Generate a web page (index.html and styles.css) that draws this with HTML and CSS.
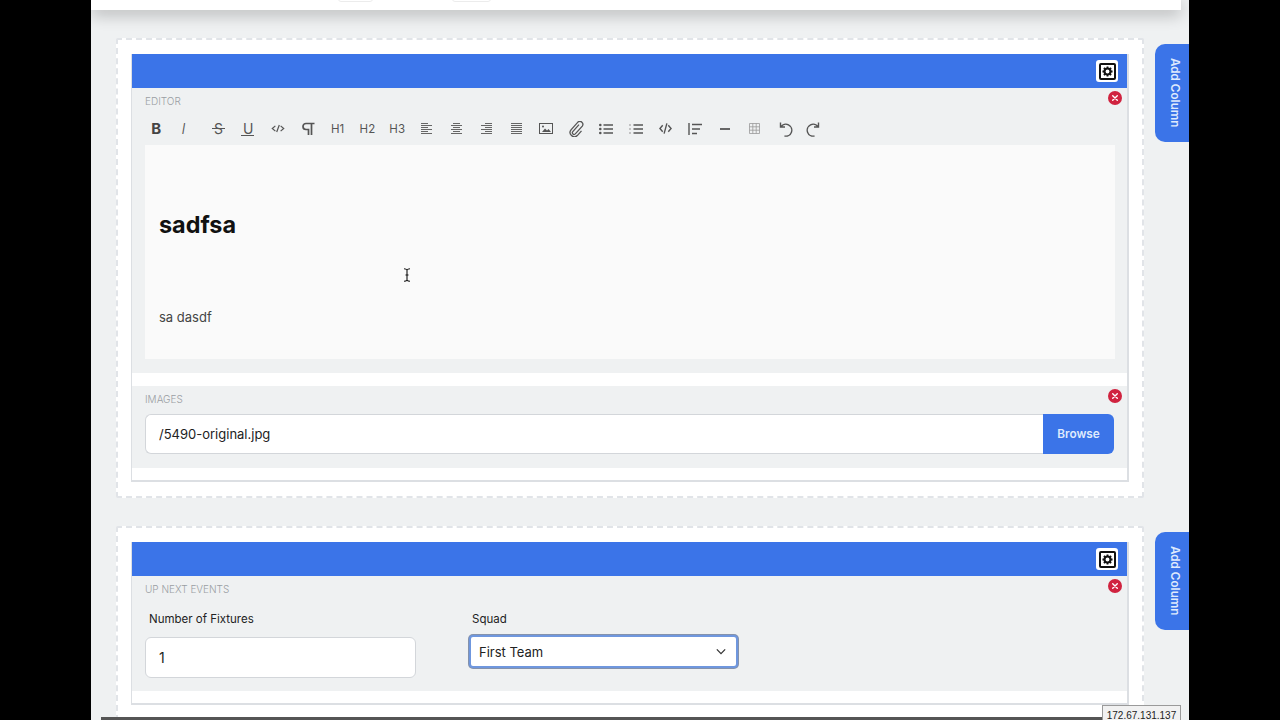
FILE: index.html
```html
<!DOCTYPE html>
<html lang="en">
<head>
<meta charset="utf-8">
<title>Page builder</title>
<link rel="stylesheet" href="styles.css">
</head>
<body>
<div class="page">
  <header class="topbar"><span class="stub stub-a"></span><span class="stub stub-b"></span></header>
  <div class="rows">
    <section class="row">
      <div class="dash">
        <div class="card">
          <div class="card-head"><button class="gear"><span class="gear-box"><svg viewBox="0 0 24 24" width="11" height="11"><circle cx="12" cy="12" r="6.500" fill="none" stroke="#111" stroke-width="4.500"/><path d="M12 1v5M12 18v5M1 12h5M18 12h5M4.200 4.200l3.500 3.500M16.300 16.300l3.500 3.500M19.800 4.200l-3.500 3.500M7.700 16.300l-3.500 3.500" stroke="#111" stroke-width="4"/></svg></span></button></div>
          <div class="block block-editor">
            <span class="remove"><svg viewBox="0 0 14 14" width="8" height="8"><path d="M3 3l8 8M11 3l-8 8" stroke="#fff" stroke-width="2.4" stroke-linecap="round"/></svg></span>
            <div class="block-label">EDITOR</div>
            <div class="toolbar">
              <span class="tool tool-b">B</span>
              <span class="tool tool-i">I</span>
              <span class="tool tool-s">S</span>
              <span class="tool tool-u">U</span>
              <span class="tool"><svg viewBox="0 0 16 12" width="14" height="11"><path d="M5 3L1.500 6 5 9M11 3l3.500 3L11 9M9.500 2l-3 8" fill="none" stroke="#555" stroke-width="1.400"/></svg></span>
              <span class="tool"><svg viewBox="0 0 14 14" width="14" height="14"><path d="M13.500 1.500H5a3 3 0 0 0 0 6h2.500V13M10.500 1.500V13" fill="none" stroke="#555" stroke-width="1.700"/></svg></span>
              <span class="tool tool-h">H1</span>
              <span class="tool tool-h">H2</span>
              <span class="tool tool-h">H3</span>
              <span class="tool"><svg viewBox="0 0 11 11" width="11" height="11"><path d="M0 .5h7M0 2.500h11M0 4.500h7M0 6.500h11M0 8.500h7M0 10.500h11" stroke="#666"/></svg></span>
              <span class="tool"><svg viewBox="0 0 11 11" width="11" height="11"><path d="M2 .5h7M0 2.500h11M2 4.500h7M0 6.500h11M2 8.500h7M0 10.500h11" stroke="#666"/></svg></span>
              <span class="tool"><svg viewBox="0 0 11 11" width="11" height="11"><path d="M4 .5h7M0 2.500h11M4 4.500h7M0 6.500h11M4 8.500h7M0 10.500h11" stroke="#666"/></svg></span>
              <span class="tool"><svg viewBox="0 0 11 11" width="11" height="11"><path d="M0 .5h11M0 2.500h11M0 4.500h11M0 6.500h11M0 8.500h11M0 10.500h11" stroke="#666"/></svg></span>
              <span class="tool"><svg viewBox="0 0 14 11" width="14" height="11"><rect x=".5" y=".5" width="13" height="10" fill="none" stroke="#555"/><path d="M3 9l3-3.500 2 2 1.500-1.500L12 9z" fill="#555"/><circle cx="4" cy="3.500" r="1" fill="#555"/></svg></span>
              <span class="tool"><svg viewBox="0 0 16 16" width="16" height="16"><path d="M10.800 3.800l-6.200 7a1.700 1.700 0 0 0 2.500 2.300l7-7.800a3 3 0 0 0-4.400-4L2.800 9a4.300 4.300 0 0 0 6.300 5.800l4.200-4.700" transform="translate(.2 -.2)" fill="none" stroke="#555" stroke-width="1.300"/></svg></span>
              <span class="tool"><svg viewBox="0 0 14 12" width="14" height="12"><path d="M4.500 2H14M4.500 6H14M4.500 10H14" stroke="#555" stroke-width="1.300"/><circle cx="1.300" cy="2" r="1.300" fill="#555"/><circle cx="1.300" cy="6" r="1.300" fill="#555"/><circle cx="1.300" cy="10" r="1.300" fill="#555"/></svg></span>
              <span class="tool"><svg viewBox="0 0 14 12" width="14" height="12"><path d="M4.500 2H14M4.500 6H14M4.500 10H14" stroke="#555" stroke-width="1.300"/><path d="M1 1v2M1 5v2M1 9v2" stroke="#aaa" stroke-width="1.300"/></svg></span>
              <span class="tool"><svg viewBox="0 0 14 14" width="13" height="13"><path d="M4 3.500L1 7l3 3.500M10 3.500L13 7l-3 3.500M8.500 1.500l-3 11" fill="none" stroke="#555" stroke-width="1.500"/></svg></span>
              <span class="tool"><svg viewBox="0 0 14 12" width="14" height="12"><path d="M1 0v12" stroke="#555" stroke-width="1.400"/><path d="M4 1.500h10M4 6h8M4 10.500h5" stroke="#555" stroke-width="1.400"/></svg></span>
              <span class="tool tool-hr"><svg viewBox="0 0 10 4" width="10" height="4"><path d="M0 2h10" stroke="#444" stroke-width="1.600"/></svg></span>
              <span class="tool"><svg viewBox="0 0 11 11" width="11" height="11"><path d="M.5.5h10v10H.5zM.5 3.800h10M.5 7.200h10M3.800.5v10M7.200.5v10" fill="none" stroke="#999" stroke-width=".8"/></svg></span>
              <span class="tool"><svg viewBox="0 0 16 16" width="16" height="16"><path d="M3.500 1.500v4.500H8M3.800 5.800A6 6 0 1 1 7.500 15" fill="none" stroke="#555" stroke-width="1.400"/></svg></span>
              <span class="tool"><svg viewBox="0 0 16 16" width="16" height="16"><path d="M12.500 1.500v4.500H8M12.200 5.800A6 6 0 1 0 8.500 15" fill="none" stroke="#555" stroke-width="1.400"/></svg></span>
            </div>
            <div class="editor">
              <h2 class="editor-title">sadfsa</h2>
              <p class="editor-text">sa dasdf</p>
            </div>
          </div>
          <div class="block block-images">
            <span class="remove"><svg viewBox="0 0 14 14" width="8" height="8"><path d="M3 3l8 8M11 3l-8 8" stroke="#fff" stroke-width="2.4" stroke-linecap="round"/></svg></span>
            <div class="block-label">IMAGES</div>
            <div class="file">
              <input class="file-input" type="text" value="/5490-original.jpg">
              <button class="browse">Browse</button>
            </div>
          </div>
        </div>
      </div>
      <button class="add-col">Add Column</button>
    </section>
    <section class="row">
      <div class="dash">
        <div class="card">
          <div class="card-head"><button class="gear"><span class="gear-box"><svg viewBox="0 0 24 24" width="11" height="11"><circle cx="12" cy="12" r="6.500" fill="none" stroke="#111" stroke-width="4.500"/><path d="M12 1v5M12 18v5M1 12h5M18 12h5M4.200 4.200l3.500 3.500M16.300 16.300l3.500 3.500M19.800 4.200l-3.500 3.500M7.700 16.300l-3.500 3.500" stroke="#111" stroke-width="4"/></svg></span></button></div>
          <div class="block block-events">
            <span class="remove"><svg viewBox="0 0 14 14" width="8" height="8"><path d="M3 3l8 8M11 3l-8 8" stroke="#fff" stroke-width="2.4" stroke-linecap="round"/></svg></span>
            <div class="block-label">UP NEXT EVENTS</div>
            <div class="fields">
              <div class="field field-num">
                <label class="field-label">Number of Fixtures</label>
                <input class="num-input" type="text" value="1">
              </div>
              <div class="field field-squad">
                <label class="field-label">Squad</label>
                <div class="select-wrap">
                  <select class="select"><option>First Team</option></select>
                  <svg class="chevron" viewBox="0 0 12 8" width="10" height="7"><path d="M1 1.500l5 5 5-5" fill="none" stroke="#333" stroke-width="1.500"/></svg>
                </div>
              </div>
            </div>
          </div>
        </div>
      </div>
      <button class="add-col">Add Column</button>
    </section>
  </div>
</div>
<svg class="cursor" viewBox="0 0 8 14" width="8" height="14"><path d="M1 .7c1.500 0 2.500.5 3 1.300.5-.8 1.500-1.300 3-1.300M1 13.300c1.500 0 2.500-.5 3-1.300.5.8 1.500 1.300 3 1.300M4 2v10M2.500 7h3" fill="none" stroke="#111" stroke-width="1.100"/></svg>
<div class="bottom-bar"></div>
<div class="ip">172.67.131.137</div>
</body>
</html>
```
FILE: styles.css
```css
* { box-sizing: border-box; }
html, body { margin: 0; height: 100%; }
body {
  width: 1280px;
  height: 720px;
  overflow: hidden;
  background: #000;
  font-family: Inter, "Noto Sans", sans-serif;
  color: #222;
}
.page {
  width: 1098px;
  height: 720px;
  margin-left: 91px;
  overflow: hidden;
  background: #eff1f2;
}
.topbar {
  position: relative;
  height: 10px;
  background: #fff;
  box-shadow: 0 4px 16px rgba(0, 0, 0, .3);
  margin-right: 8px;
}
.stub {
  position: absolute;
  top: -4px;
  height: 6px;
  border: 1px solid #ececec;
  border-radius: 3px;
}
.stub-a { left: 247px; width: 35px; }
.stub-b { left: 361px; width: 39px; }
.rows {
  display: flex;
  flex-direction: column;
  gap: 28px;
  padding: 28px 0 0 25px;
}
.row { display: flex; align-items: flex-start; gap: 11px; }
.dash {
  width: 1028px;
  padding: 14px 13px;
  background: #fff;
  border: 2px dashed #e1e4e8;
  border-radius: 2px;
}
.card {
  background: #fff;
  border: 1px solid #dcdfe3;
  border-width: 0 2px 2px 1px;
  padding-bottom: 12px;
}
.card-head {
  display: flex;
  justify-content: flex-end;
  align-items: center;
  height: 34px;
  padding-right: 9px;
  background: #3b74e8;
}
.gear {
  display: flex;
  align-items: center;
  justify-content: center;
  width: 22px;
  height: 22px;
  padding: 0;
  border: 0;
  border-radius: 3px;
  background: #fff;
}
.gear-box {
  display: flex;
  align-items: center;
  justify-content: center;
  width: 17px;
  height: 17px;
  border: 2px solid #111;
  border-radius: 2px;
}
.block {
  position: relative;
  padding: 0 13px 14px;
  background: #eff1f2;
}
.remove {
  position: absolute;
  top: 3px;
  right: 5px;
  display: flex;
  align-items: center;
  justify-content: center;
  width: 14px;
  height: 14px;
  border-radius: 50%;
  background: #d0233f;
}
.block-label {
  height: 26px;
  padding-top: 7px;
  font-size: 10px;
  line-height: 12px;
  font-weight: 300;
  color: #9a9ea3;
}
.toolbar {
  display: flex;
  align-items: flex-start;
  height: 31px;
  color: #555;
}
.tool {
  position: relative;
  display: flex;
  align-items: center;
  justify-content: center;
  flex: none;
  width: 29.8px;
  height: 29px;
  font-size: 14px;
}
.tool-b { width: 22.500px; font-weight: 700; font-size: 15px; color: #444; }
.tool-i { width: 32px; margin-right: 4px; font-style: italic; font-weight: 300; font-size: 15px; }
.tool-s, .tool-u { font-size: 14px; }
.tool-s::after, .tool-u::after {
  content: "";
  position: absolute;
  left: 8px;
  width: 13px;
  height: 1px;
  background: #555;
}
.tool-s::after { top: 14px; }
.tool-u::after { top: 21px; }
.tool-h { font-size: 11.5px; }
.editor {
  height: 214px;
  margin-right: -1px;
  padding: 0 14px;
  background: #fafafa;
  overflow: hidden;
}
.editor-title {
  margin: 67px 0 0;
  font-size: 23.4px;
  line-height: 26px;
  font-weight: 700;
  color: #111;
}
.editor-text {
  margin: 70px 0 0;
  font-size: 13px;
  line-height: 18px;
  color: #444;
}
.block-images { margin-top: 13px; }
.block-images .block-label { height: 28px; }
.file { display: flex; height: 40px; }
.file-input {
  flex: 1;
  min-width: 0;
  height: 40px;
  padding: 0 13px;
  border: 1px solid #d3d6da;
  border-right: 0;
  border-radius: 6px 0 0 6px;
  background: #fff;
  font: 400 13px Inter, sans-serif;
  color: #222;
  outline: 0;
}
.browse {
  width: 71px;
  border: 0;
  border-radius: 0 6px 6px 0;
  background: #3b74e8;
  color: #dfeafd;
  font: 600 11.8px Inter, sans-serif;
}
.block-events { padding: 0 13px 13px; }
.fields { display: flex; height: 76px; }
.field { position: relative; display: flex; flex-direction: column; }
.field-num { width: 271px; margin-right: 53px; padding-top: 10px; }
.field-squad { width: 269px; padding-top: 10px; }
.field-label {
  height: 17px;
  margin: 0 0 0 4px;
  font-size: 11.5px;
  line-height: 15px;
  color: #222;
}
.field-squad .field-label { margin-left: 3px; }
.num-input {
  height: 41px;
  margin-top: 8px;
  padding: 0 13px;
  border: 1px solid #d3d6da;
  border-radius: 6px;
  background: #fff;
  font: 400 14px Inter, sans-serif;
  color: #222;
  outline: 0;
}
.select-wrap { position: relative; height: 33px; margin-top: 6px; }
.select {
  appearance: none;
  width: 100%;
  height: 33px;
  padding: 0 8px;
  border: 2px solid #6f97de;
  border-radius: 4px;
  background: #fff;
  box-shadow: 0 0 0 1px #8492ac;
  font: 400 13px Inter, sans-serif;
  color: #222;
  outline: 0;
}
.chevron { position: absolute; right: 12px; top: 13px; }
.add-col {
  display: flex;
  align-items: center;
  justify-content: center;
  width: 34px;
  height: 98px;
  margin-top: 6px;
  padding: 0 0 0 6px;
  border: 0;
  border-radius: 10px 0 0 10px;
  background: #3b74e8;
  color: #dfeafd;
  font: 600 11.7px Inter, sans-serif;
  writing-mode: vertical-rl;
}
.cursor { position: fixed; left: 403px; top: 268px; }
.bottom-bar {
  position: fixed;
  left: 101px;
  top: 717px;
  width: 1080px;
  height: 3px;
  background: #555;
}
.ip {
  position: fixed;
  left: 1102px;
  top: 705px;
  width: 79px;
  height: 18px;
  padding-top: 4px;
  border: 1px solid #9a9a9a;
  background: #f1f1f1;
  font: 400 10px/12px "Liberation Sans", sans-serif;
  color: #222;
  text-align: center;
  white-space: nowrap;
}
```
